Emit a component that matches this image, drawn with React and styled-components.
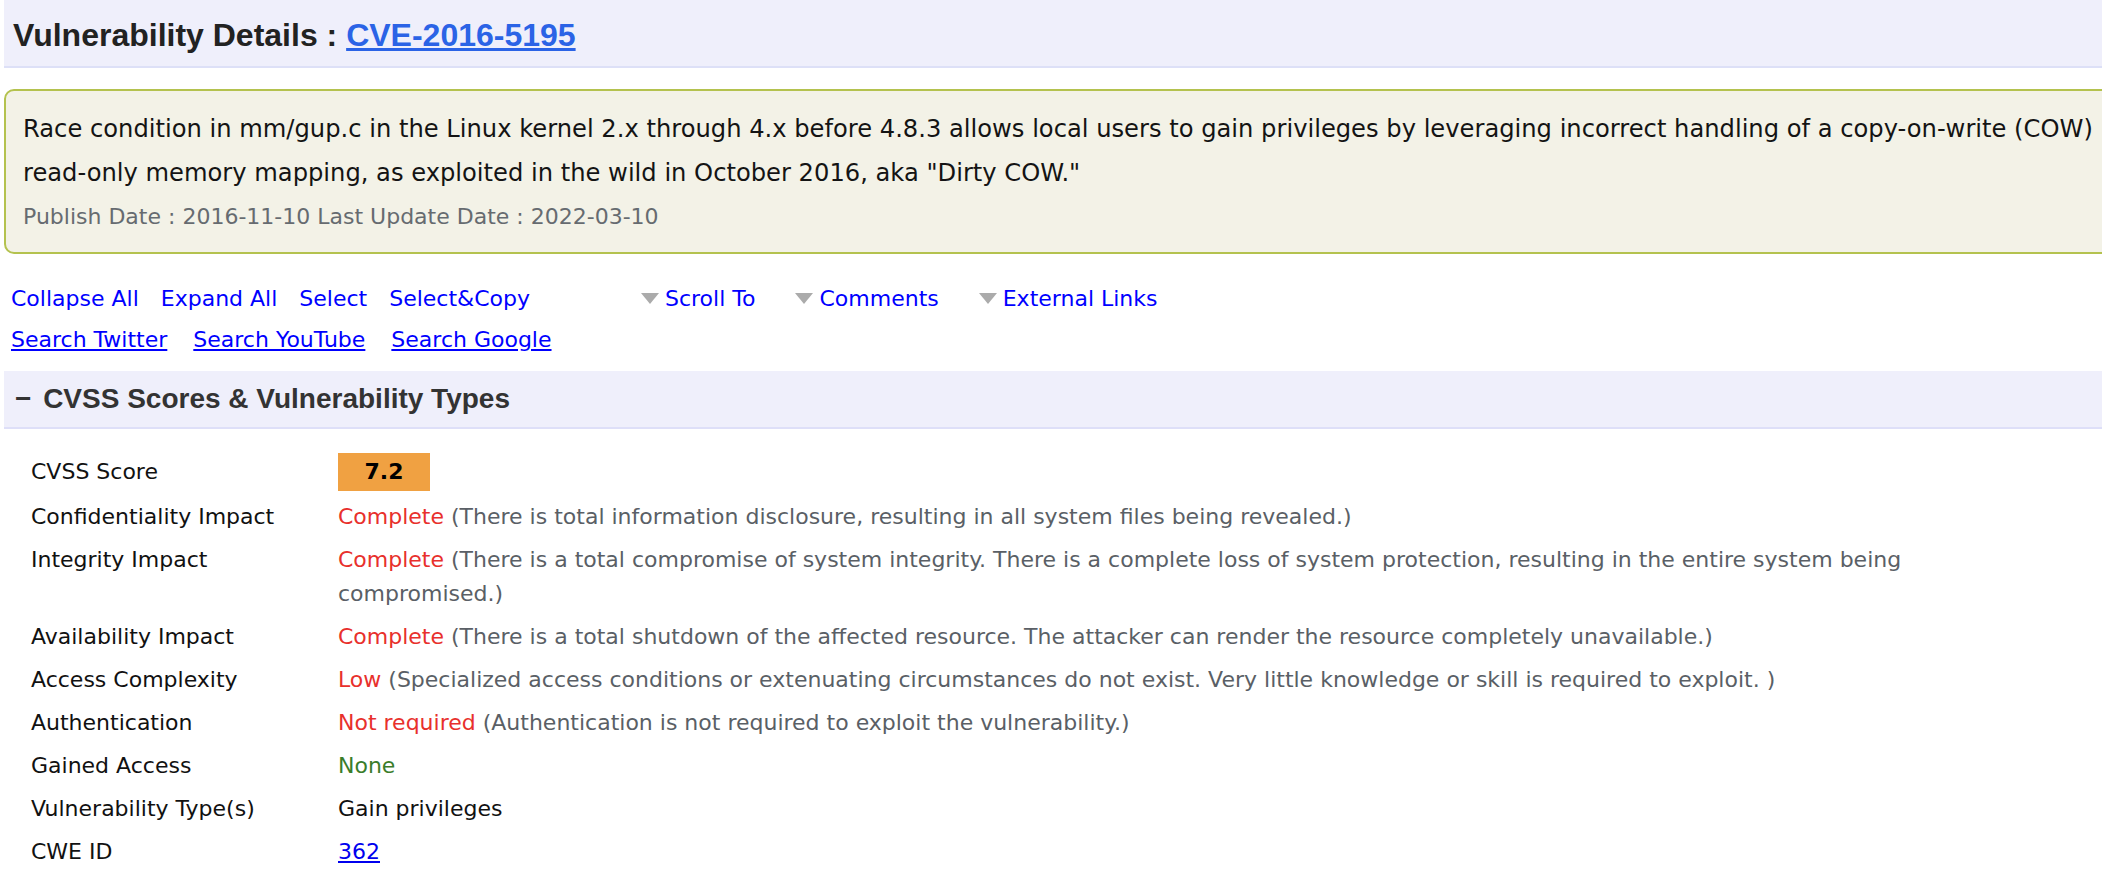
import React from "react";
import styled, { createGlobalStyle } from "styled-components";

const GlobalStyle = createGlobalStyle`
  html, body {
    margin: 0;
    padding: 0;
    overflow: hidden;
    background: #ffffff;
  }
  body {
    font-family: "DejaVu Sans", Verdana, sans-serif;
    color: #111111;
  }
`;

const Page = styled.div`
  width: 2140px;
  padding-left: 4px;
  box-sizing: border-box;
`;

const TitleBar = styled.h1`
  margin: 0;
  padding: 17px 0 13px 9px;
  background: #efeffb;
  border-bottom: 2px solid #dde0f7;
  font: bold 32px/36px "Liberation Sans", Arial, sans-serif;
  color: #222222;
`;

const TitleLink = styled.a`
  color: #2b63e6;
  text-decoration: underline;
`;

const Summary = styled.div`
  margin-top: 21px;
  border: 2px solid #b4c24e;
  border-radius: 10px;
  background: #f3f2e7;
  padding: 16px 17px 17px;
`;

const SummaryText = styled.div`
  font-size: 24.2px;
  line-height: 44px;
  color: #141414;
`;

const Dates = styled.div`
  margin-top: 4px;
  font-size: 22px;
  line-height: 36px;
  color: #666b70;
`;

const Toolbar = styled.div`
  margin-top: 24px;
  padding-left: 7px;
  font-size: 22px;
  line-height: 41px;
`;

const ToolRow = styled.div`
  display: flex;
  align-items: baseline;
`;

const LinkGroup = styled.div`
  display: flex;
  gap: ${(p) => (p.$fixed ? "22px" : "26px")};
  flex: ${(p) => (p.$fixed ? "0 0 630px" : "0 0 auto")};
`;

const DropGroup = styled.div`
  display: flex;
  gap: 40px;
`;

const ToolLink = styled.a`
  color: #0000ff;
  text-decoration: ${(p) => (p.$underline ? "underline" : "none")};
  cursor: pointer;
  white-space: nowrap;
`;

const Caret = styled.svg`
  width: 18px;
  height: 11px;
  margin-right: 6px;
  vertical-align: 2px;
`;

const SectionBar = styled.h2`
  margin: 11px 0 0;
  height: 56px;
  padding-left: 11px;
  background: #efeffb;
  border-bottom: 2px solid #dedff8;
  font: bold 28px/56px "Liberation Sans", Arial, sans-serif;
  color: #333333;
`;

const Toggle = styled.span`
  margin-right: 4px;
`;

const Table = styled.div`
  margin-top: 19px;
  padding-left: 27px;
  font-size: 22px;
  line-height: 34px;
`;

const Row = styled.div`
  display: grid;
  grid-template-columns: 307px 1660px;
  align-items: ${(p) => (p.$center ? "center" : "start")};
  padding: 4.5px 0;
`;

const Label = styled.div`
  color: #111111;
`;

const Value = styled.div`
  color: ${(p) => p.$color || "#5a5f66"};
`;

const Level = styled.span`
  color: ${(p) => (p.$good ? "#3a7d2a" : "#e8302c")};
`;

const ScoreBox = styled.span`
  display: inline-block;
  width: 92px;
  height: 38px;
  line-height: 38px;
  text-align: center;
  background: #f0a142;
  color: #000000;
  font-weight: bold;
`;

const CweLink = styled.a`
  color: #0000ee;
  text-decoration: underline;
`;

const Triangle = () => (
  <Caret viewBox="0 0 18 11">
    <polygon points="0,0 18,0 9,11" fill="#ababab" />
  </Caret>
);

const impacts = [
  {
    label: "Confidentiality Impact",
    level: "Complete",
    text: " (There is total information disclosure, resulting in all system files being revealed.)",
  },
  {
    label: "Integrity Impact",
    level: "Complete",
    text: " (There is a total compromise of system integrity. There is a complete loss of system protection, resulting in the entire system being compromised.)",
  },
  {
    label: "Availability Impact",
    level: "Complete",
    text: " (There is a total shutdown of the affected resource. The attacker can render the resource completely unavailable.)",
  },
  {
    label: "Access Complexity",
    level: "Low",
    text: " (Specialized access conditions or extenuating circumstances do not exist. Very little knowledge or skill is required to exploit. )",
  },
  {
    label: "Authentication",
    level: "Not required",
    text: " (Authentication is not required to exploit the vulnerability.)",
  },
];

export default function App() {
  return (
    <>
      <GlobalStyle />
      <Page>
        <TitleBar>
          Vulnerability Details : <TitleLink href="#">CVE-2016-5195</TitleLink>
        </TitleBar>

        <Summary>
          <SummaryText>
            Race condition in mm/gup.c in the Linux kernel 2.x through 4.x before 4.8.3 allows local users to gain
            privileges by leveraging incorrect handling of a copy-on-write (COW) read-only memory mapping, as exploited
            in the wild in October 2016, aka "Dirty COW."
          </SummaryText>
          <Dates>Publish Date : 2016-11-10 Last Update Date : 2022-03-10</Dates>
        </Summary>

        <Toolbar>
          <ToolRow>
            <LinkGroup $fixed>
              <ToolLink>Collapse All</ToolLink>
              <ToolLink>Expand All</ToolLink>
              <ToolLink>Select</ToolLink>
              <ToolLink>Select&amp;Copy</ToolLink>
            </LinkGroup>
            <DropGroup>
              <ToolLink>
                <Triangle />
                Scroll To
              </ToolLink>
              <ToolLink>
                <Triangle />
                Comments
              </ToolLink>
              <ToolLink>
                <Triangle />
                External Links
              </ToolLink>
            </DropGroup>
          </ToolRow>
          <ToolRow>
            <LinkGroup>
              <ToolLink $underline>Search Twitter</ToolLink>
              <ToolLink $underline>Search YouTube</ToolLink>
              <ToolLink $underline>Search Google</ToolLink>
            </LinkGroup>
          </ToolRow>
        </Toolbar>

        <SectionBar>
          <Toggle>−</Toggle> CVSS Scores &amp; Vulnerability Types
        </SectionBar>

        <Table>
          <Row $center>
            <Label>CVSS Score</Label>
            <Value>
              <ScoreBox>7.2</ScoreBox>
            </Value>
          </Row>
          {impacts.map((r) => (
            <Row key={r.label}>
              <Label>{r.label}</Label>
              <Value>
                <Level>{r.level}</Level>
                {r.text}
              </Value>
            </Row>
          ))}
          <Row>
            <Label>Gained Access</Label>
            <Value>
              <Level $good>None</Level>
            </Value>
          </Row>
          <Row>
            <Label>Vulnerability Type(s)</Label>
            <Value $color="#111111">Gain privileges</Value>
          </Row>
          <Row>
            <Label>CWE ID</Label>
            <Value>
              <CweLink href="#">362</CweLink>
            </Value>
          </Row>
        </Table>
      </Page>
    </>
  );
}
